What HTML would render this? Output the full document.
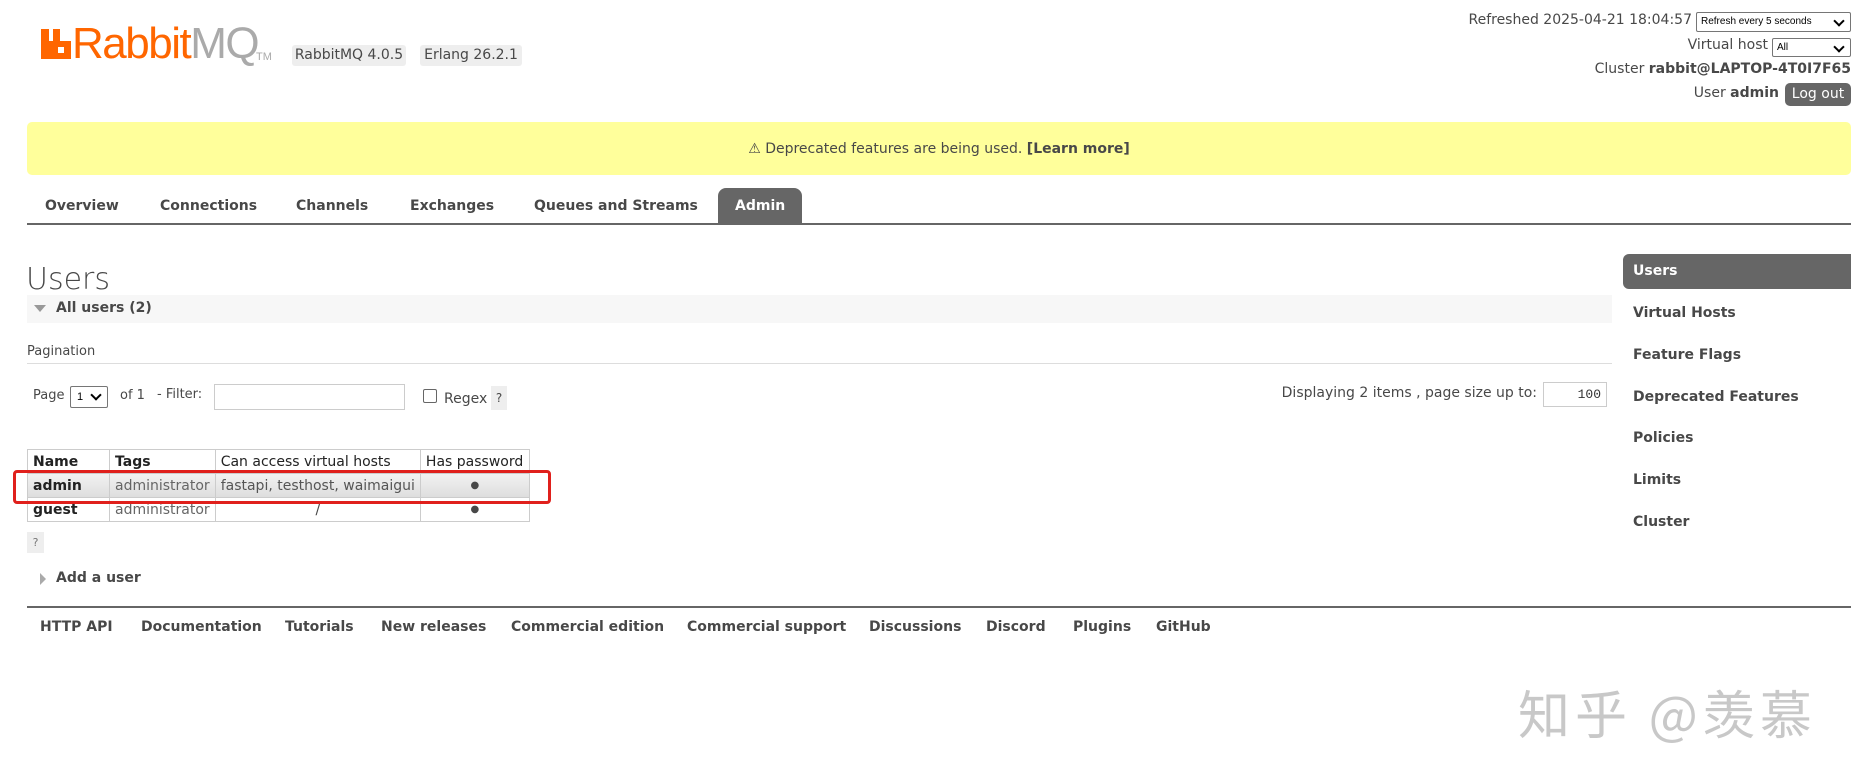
<!DOCTYPE html>
<html><head><meta charset="utf-8"><style>
*{box-sizing:border-box;margin:0;padding:0}
body{width:1857px;height:782px;position:relative;background:#fff;font-family:"DejaVu Sans","Liberation Sans",sans-serif;font-size:13px;color:#484848;overflow:hidden}
.a{position:absolute;white-space:nowrap}
.b{font-weight:bold}
.sel{position:absolute;border:1px solid #767676;border-radius:2px;background:#fff;font-family:"Liberation Sans",sans-serif;font-size:10px;color:#000;padding:3px 4px}
.sel:after{content:"";position:absolute;right:7px;top:4px;width:6px;height:6px;border-right:2px solid #000;border-bottom:2px solid #000;transform:rotate(45deg)}
.nav{position:absolute;top:198px;font-weight:bold;font-size:14px;color:#484848}
.side{position:absolute;left:1633px;font-weight:bold;font-size:14px;color:#484848}
.foot{position:absolute;top:619px;font-weight:bold;font-size:14px;color:#484848}
table{position:absolute;left:27px;top:449px;border-collapse:collapse}
td{border:1px solid #ccc;height:24px;padding:0 5px;font-size:14px;white-space:nowrap}
</style></head><body>
<!-- logo -->
<div class="a" style="left:41px;top:29px;width:30px;height:30px">
<div style="position:absolute;left:0;top:0;width:8px;height:30px;background:#f60"></div>
<div style="position:absolute;left:12px;top:0;width:7px;height:12px;background:#f60"></div>
<div style="position:absolute;left:0;top:12px;width:30px;height:18px;background:#f60"></div>
<div style="position:absolute;left:17px;top:18px;width:6px;height:6px;background:#fff"></div>
</div>
<div class="a" style="left:72px;top:19px;font-family:'Liberation Sans',sans-serif;font-size:44px;color:#f60;letter-spacing:-1.5px">Rabbit<span style="color:#aaa">MQ</span></div>
<div class="a" style="left:256px;top:51px;font-size:11px;color:#aaa;font-family:'Liberation Sans',sans-serif">TM</div>
<div class="a" style="left:292px;top:45px;width:114px;height:21px;background:#eee;border-radius:3px;text-align:center;line-height:21px;font-size:14px">RabbitMQ 4.0.5</div>
<div class="a" style="left:420px;top:45px;width:102px;height:21px;background:#eee;border-radius:3px;text-align:center;line-height:21px;font-size:14px">Erlang 26.2.1</div>
<!-- header right -->
<div class="a" style="right:165px;top:12px;font-size:14px">Refreshed 2025-04-21 18:04:57</div>
<div class="sel" style="left:1696px;top:12px;width:155px;height:20px">Refresh every 5 seconds</div>
<div class="a" style="right:89px;top:37px;font-size:14px">Virtual host</div>
<div class="sel" style="left:1772px;top:38px;width:79px;height:19px">All</div>
<div class="a" style="right:6px;top:61px;font-size:14px">Cluster <b>rabbit@LAPTOP-4T0I7F65</b></div>
<div class="a" style="right:78px;top:85px;font-size:14px">User <b>admin</b></div>
<div class="a" style="left:1785px;top:83px;width:66px;height:23px;background:#666;color:#fff;border-radius:5px;text-align:center;line-height:23px;font-size:14px">Log out</div>
<!-- banner -->
<div class="a" style="left:27px;top:122px;width:1824px;height:53px;background:#ffff9b;border-radius:5px;text-align:center;line-height:55px;font-size:14px;color:#484848">⚠ Deprecated features are being used. <b>[Learn more]</b></div>
<!-- nav -->
<div class="nav" style="left:45px">Overview</div>
<div class="nav" style="left:160px">Connections</div>
<div class="nav" style="left:296px">Channels</div>
<div class="nav" style="left:410px">Exchanges</div>
<div class="nav" style="left:534px">Queues and Streams</div>
<div class="a" style="left:718px;top:188px;width:84px;height:36px;background:#666;border-radius:8px 8px 0 0"></div>
<div class="nav" style="left:735px;color:#fff">Admin</div>
<div class="a" style="left:27px;top:223px;width:1824px;height:2px;background:#666"></div>
<!-- content -->
<div class="a" style="left:26px;top:262px;font-size:30px;color:#484848;font-weight:300">Users</div>
<div class="a" style="left:27px;top:295px;width:1585px;height:28px;background:#f7f7f7"></div>
<div class="a" style="left:34px;top:305px;width:0;height:0;border-left:6px solid transparent;border-right:6px solid transparent;border-top:7px solid #999"></div>
<div class="a b" style="left:56px;top:300px;font-size:14px">All users (2)</div>
<div class="a" style="left:27px;top:344px">Pagination</div>
<div class="a" style="left:27px;top:363px;width:1585px;height:1px;background:#ddd"></div>
<div class="a" style="left:33px;top:388px">Page</div>
<div class="sel" style="left:70px;top:386px;width:38px;height:22px;font-size:11px;padding:4px 6px">1</div>
<div class="a" style="left:120px;top:388px">of 1</div>
<div class="a" style="left:157px;top:387px">- Filter:</div>
<div class="a" style="left:214px;top:384px;width:191px;height:26px;border:1px solid #ccc"></div>
<div class="a" style="left:423px;top:389px;width:14px;height:14px;border:1px solid #666;border-radius:2px"></div>
<div class="a" style="left:444px;top:391px;font-size:14px">Regex</div>
<div class="a" style="left:491px;top:386px;width:16px;height:24px;background:#eee;text-align:center;line-height:24px;font-size:12px">?</div>
<div class="a" style="right:320px;top:385px;font-size:14px">Displaying 2 items , page size up to:</div>
<div class="a" style="left:1543px;top:382px;width:64px;height:25px;border:1px solid #ccc;text-align:right;padding-right:5px;line-height:23px;font-family:'Liberation Mono',monospace;font-size:13px;color:#333">100</div>
<table>
<tr><td class="b" style="width:82px;color:#222">Name</td><td class="b" style="width:103px;color:#222">Tags</td><td style="width:202px;color:#222">Can access virtual hosts</td><td style="width:109px;color:#222">Has password</td></tr>
<tr style="background:linear-gradient(#f2f2f2,#ddd)"><td class="b" style="color:#222">admin</td><td style="color:#666">administrator</td><td style="color:#555">fastapi, testhost, waimaigui</td><td style="text-align:center;font-size:10px">●</td></tr>
<tr><td class="b" style="color:#222">guest</td><td style="color:#666">administrator</td><td style="text-align:center">/</td><td style="text-align:center;font-size:10px">●</td></tr>
</table>
<div class="a" style="left:13px;top:470px;width:538px;height:34px;border:3px solid #e0201c;border-radius:4px"></div>
<div class="a" style="left:27px;top:532px;width:17px;height:21px;background:#eee;text-align:center;line-height:21px;font-size:11px;color:#777">?</div>
<div class="a" style="left:40px;top:573px;width:0;height:0;border-top:6px solid transparent;border-bottom:6px solid transparent;border-left:6px solid #aaa"></div>
<div class="a b" style="left:56px;top:570px;font-size:14px">Add a user</div>
<!-- sidebar -->
<div class="a" style="left:1623px;top:254px;width:228px;height:35px;background:#666;border-radius:6px 0 0 6px"></div>
<div class="side" style="top:263px;color:#fff">Users</div>
<div class="side" style="top:305px">Virtual Hosts</div>
<div class="side" style="top:347px">Feature Flags</div>
<div class="side" style="top:389px">Deprecated Features</div>
<div class="side" style="top:430px">Policies</div>
<div class="side" style="top:472px">Limits</div>
<div class="side" style="top:514px">Cluster</div>
<!-- footer -->
<div class="a" style="left:27px;top:606px;width:1824px;height:2px;background:#666"></div>
<div class="foot" style="left:40px">HTTP API</div>
<div class="foot" style="left:141px">Documentation</div>
<div class="foot" style="left:285px">Tutorials</div>
<div class="foot" style="left:381px">New releases</div>
<div class="foot" style="left:511px">Commercial edition</div>
<div class="foot" style="left:687px">Commercial support</div>
<div class="foot" style="left:869px">Discussions</div>
<div class="foot" style="left:986px">Discord</div>
<div class="foot" style="left:1073px">Plugins</div>
<div class="foot" style="left:1156px">GitHub</div>
<div class="a" style="left:1518px;top:674px;font-family:'Noto Sans CJK SC',sans-serif;font-size:52px;color:#c8c8c8;letter-spacing:5px">知乎 @羡慕</div>
</body></html>
